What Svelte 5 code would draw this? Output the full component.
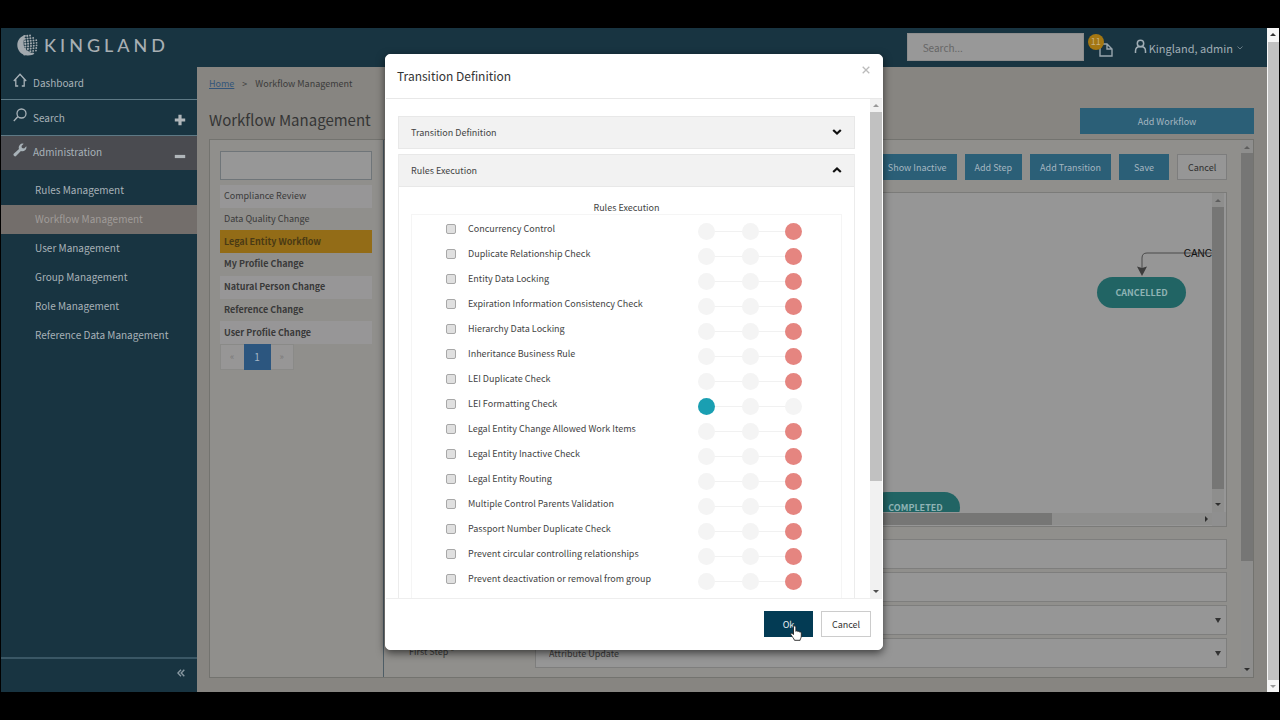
<script>
  const subItems = [
    'Rules Management',
    'Workflow Management',
    'User Management',
    'Group Management',
    'Role Management',
    'Reference Data Management'
  ];

  const workflows = [
    { name: 'Compliance Review' },
    { name: 'Data Quality Change' },
    { name: 'Legal Entity Workflow', bold: true, active: true },
    { name: 'My Profile Change', bold: true },
    { name: 'Natural Person Change', bold: true },
    { name: 'Reference Change', bold: true },
    { name: 'User Profile Change', bold: true }
  ];

  // level: 0 = on, 1 = warn, 2 = off
  const rules = [
    'Concurrency Control',
    'Duplicate Relationship Check',
    'Entity Data Locking',
    'Expiration Information Consistency Check',
    'Hierarchy Data Locking',
    'Inheritance Business Rule',
    'LEI Duplicate Check',
    'LEI Formatting Check',
    'Legal Entity Change Allowed Work Items',
    'Legal Entity Inactive Check',
    'Legal Entity Routing',
    'Multiple Control Parents Validation',
    'Passport Number Duplicate Check',
    'Prevent circular controlling relationships',
    'Prevent deactivation or removal from group'
  ].map((name) => ({ name, level: name === 'LEI Formatting Check' ? 0 : 2 }));

  const globeDots = [];
  for (let row = 0; row < 8; row++) {
    for (let col = 0; col < 5; col++) {
      const x = 8.5 + col * 2.8 - Math.abs(row - 3.5) * 0.3;
      const y = 2.2 + row * 2.6 - col * 0.3;
      if ((x - 10.5) ** 2 + (y - 11) ** 2 < 108) globeDots.push({ x, y, r: 1.15 - col * 0.06 });
    }
  }
</script>

{#snippet bar(axis, cls)}
  <div class="bar {axis} {cls}" aria-hidden="true">
    <svg class="arrow" viewBox="0 0 12 12"><path d={axis === 'v' ? 'M3 8 6 5l3 3z' : 'M8 3 5 6l3 3z'} /></svg>
    <div class="track"><div class="thumb"></div></div>
    <svg class="arrow end" viewBox="0 0 12 12"><path d={axis === 'v' ? 'M3 5l3 3 3-3z' : 'M5 3l3 3-3 3z'} /></svg>
  </div>
{/snippet}

<div class="screen">
  <div class="page">
    <header class="top">
      <div class="logo">
        <svg viewBox="0 0 21 22" aria-hidden="true">
          <path d="M9 .9C3.500 1.800 .3 6 .3 11S4 21.500 11 21.500c3 0 5-1 6.500-2.300C12 19 7.500 16 6.800 11.500S7 4 9 .9z" />
          {#each globeDots as d}<circle cx={d.x} cy={d.y} r={d.r} />{/each}
        </svg>
        <span class="wordmark">KINGLAND</span>
      </div>
      <div class="tools">
        <input class="find" type="text" placeholder="Search..." aria-label="Search" />
        <button class="inbox" aria-label="Work items">
          <svg viewBox="0 0 16 16"><path d="M2 2h7l5 5v7H2zM9 2v5h5" /></svg>
          <span class="badge">11</span>
        </button>
        <button class="user">
          <svg class="person" viewBox="0 0 13 15"><circle cx="6.500" cy="4.500" r="3.200" /><path d="M1.500 14V12c0-3 2-4.500 5-4.500s5 1.500 5 4.500v2" /></svg>
          <span>Kingland, admin</span>
          <svg class="caret" viewBox="0 0 6 6"><path d="M.5 1.500 3 4l2.500-2.500" /></svg>
        </button>
      </div>
    </header>

    <div class="body">
      <nav class="side">
        <a class="item dash" href="#dashboard">
          <svg viewBox="0 0 14 14"><path d="M.8 8 7 1.200 13.200 8M2.800 6.500V13h2.400M11.200 6.500V13H8.800" /></svg>
          <span>Dashboard</span>
        </a>
        <a class="item search" href="#search">
          <svg viewBox="0 0 14 14"><circle cx="8.500" cy="5.500" r="4.500" /><path d="M5 8.500.8 13" /></svg>
          <span>Search</span>
          <svg class="sign" viewBox="0 0 12 12"><path d="M6 .8v10.400M.8 6h10.400" /></svg>
        </a>
        <a class="item admin" href="#administration">
          <svg viewBox="0 0 14 14"><path class="solid" d="M13.300 3.300a4 4 0 0 1-5.400 4.700L3.300 12.800a1.600 1.600 0 0 1-2.300-2.300L6 6A4 4 0 0 1 10.700.7L8.500 2.900l.4 2.200 2.200.4z" /></svg>
          <span>Administration</span>
          <svg class="sign" viewBox="0 0 12 12"><path d="M.8 7.500h10.400" /></svg>
        </a>
        <ul class="sub">
          {#each subItems as s, i}
            <li><a href="#admin-{i}" class:current={i === 1}>{s}</a></li>
          {/each}
        </ul>
        <button class="collapse" aria-label="Collapse menu">
          <svg viewBox="0 0 8 8"><path d="M4 .8.9 4 4 7.200M7.300.8 4.200 4l3.100 3.200" /></svg>
        </button>
      </nav>

      <main>
        <div class="crumbs"><a href="#home">Home</a><span class="sep">&gt;</span><span>Workflow Management</span></div>
        <div class="title-row">
          <h1>Workflow Management</h1>
          <button class="btn wide">Add Workflow</button>
        </div>

        <div class="panel">
          <aside>
            <input class="filter" type="text" aria-label="Filter workflows" />
            <ul class="list">
              {#each workflows as w}
                <li class:bold={w.bold} class:active={w.active}>{w.name}</li>
              {/each}
            </ul>
            <div class="pager">
              <button>«</button><button class="on">1</button><button>»</button>
            </div>
          </aside>

          <section class="editor">
            <div class="content">
              <div class="actions">
                <button class="btn">Show Inactive</button>
                <button class="btn">Add Step</button>
                <button class="btn">Add Transition</button>
                <button class="btn save">Save</button>
                <button class="btn plain">Cancel</button>
              </div>

              <div class="diagram">
                <div class="canvas">
                  <div class="node cancelled">CANCELLED</div>
                  <div class="node completed">COMPLETED</div>
                  <svg class="edge" viewBox="0 0 75 26"><path d="M5 18V8q0-5 5-5h65" /><path class="head" d="M0 16.500 5 18l5-1.500L5 26z" /></svg>
                  <span class="edge-label">CANC</span>
                </div>
                {@render bar('v', 'dim canvas-v')}
                {@render bar('h', 'dim canvas-h')}
                <div class="corner"></div>
              </div>

              <div class="form">
                <label for="wf-name">Name</label>
                <div class="field"><input id="wf-name" type="text" /></div>
                <label for="wf-desc">Description</label>
                <div class="field"><input id="wf-desc" type="text" /></div>
                <label for="wf-type">Type</label>
                <div class="field"><select id="wf-type"><option></option></select><i></i></div>
                <label for="wf-first">First Step *</label>
                <div class="field"><select id="wf-first"><option>Attribute Update</option></select><i></i></div>
              </div>
            </div>
            {@render bar('v', 'dim editor-v')}
          </section>
        </div>
      </main>
    </div>

    <div class="overlay">
      <div class="dialog" role="dialog" aria-labelledby="dlg-title">
        <div class="dlg-head">
          <h2 id="dlg-title">Transition Definition</h2>
          <button class="close" aria-label="Close"><svg viewBox="0 0 8 8"><path d="M.7.7l6.600 6.600M7.300.7.7 7.300" /></svg></button>
        </div>
        <div class="dlg-body">
          <div class="scroll">
            <button class="acc">
              <span>Transition Definition</span>
              <svg viewBox="0 0 10 6"><path d="M1.200 1 5 4.500 8.800 1" /></svg>
            </button>
            <div class="open">
              <button class="acc">
                <span>Rules Execution</span>
                <svg viewBox="0 0 10 6"><path d="M1.200 5 5 1.500 8.800 5" /></svg>
              </button>
              <div class="acc-body">
                <h3>Rules Execution</h3>
                <div class="rules">
                  {#each rules as r, i}
                    <div class="rule">
                      <input type="checkbox" id="rule-{i}" />
                      <label for="rule-{i}">{r.name}</label>
                      <div class="levels">
                        {#each [0, 1, 2] as l}
                          <span class="dot" class:teal={r.level === l && l === 0} class:red={r.level === l && l === 2}></span>
                        {/each}
                      </div>
                    </div>
                  {/each}
                  <div class="next"><span class="dot gray"></span></div>
                </div>
              </div>
            </div>
          </div>
          {@render bar('v', 'dlg-v')}
        </div>
        <div class="dlg-foot">
          <button class="ok">
            Ok
            <svg class="pointer" viewBox="0 0 12 16"><path d="M3.500 9.500V2a1.200 1.200 0 0 1 2.400 0v4.300c.3-.8 1.900-.7 2 .3.400-.6 1.600-.4 1.700.5.700-.4 1.700 0 1.700 1V11c0 2-1 2.600-1.200 4.300H4.500C4 13.500 1.800 11.500.8 9.500c-.3-1 .8-1.700 1.500-1z" /></svg>
          </button>
          <button class="cancel">Cancel</button>
        </div>
      </div>
    </div>
  </div>
  {@render bar('v', 'page-v')}
</div>

<style>
  :global(body) { background: #000; }
  * { box-sizing: border-box; }
  .screen {
    display: flex;
    height: 100vh;
    padding: 28px 1px;
    background: #000;
    font: 9px/14px "Noto Sans CJK SC", "Noto Sans", sans-serif;
    color: #3b3b3b;
  }
  button, input, select { font: inherit; color: inherit; margin: 0; border-radius: 0; }
  button { padding: 0; border: 0; background: none; }
  a { color: inherit; text-decoration: none; }
  ul { list-style: none; margin: 0; padding: 0; }
  h1, h2, h3 { margin: 0; font-weight: 400; }
  svg { display: block; fill: none; stroke: currentColor; }

  .page { position: relative; flex: 1; min-width: 0; display: flex; flex-direction: column; }

  .top {
    flex: none;
    height: 39px;
    display: flex;
    justify-content: space-between;
    align-items: center;
    padding: 0 24px 1px 16px;
    background: #183441;
    color: #a0adb5;
  }
  .logo { display: flex; align-items: center; gap: 6px; padding-bottom: 4px; }
  .logo svg { width: 21px; height: 22px; fill: #a2a9ae; stroke: none; }
  .wordmark { font: 500 18px/20px Lato, sans-serif; letter-spacing: 4px; color: #a8afb3; }
  .tools { display: flex; align-items: center; }
  .find { width: 177px; height: 28px; padding: 0 15px; border: 1px solid #8d8d8d; background: #989898; font-size: 10px; }
  .find::placeholder { color: #666; opacity: 1; }
  .inbox { position: relative; width: 16px; height: 16px; margin: 6px 20px 0 14px; }
  .inbox svg { stroke: #98a5ad; stroke-width: 1.400; }
  .badge {
    position: absolute; left: -10px; top: -8px;
    width: 16px; height: 16px; border-radius: 8px;
    background: #a47712; color: #c7b183; font-size: 9px; line-height: 16px; text-align: center;
  }
  .user { display: flex; align-items: center; gap: 2px; font-size: 11px; line-height: 16px; padding-top: 2px; }
  .person { width: 13px; height: 15px; stroke-width: 1.500; margin-bottom: 3px; }
  .caret { width: 6px; height: 6px; margin-left: 2px; opacity: .6; }

  .body { flex: 1; min-height: 0; display: flex; }
  .side { width: 196px; flex: none; display: flex; flex-direction: column; background: #183441; color: #a8b2b8; font-size: 10px; line-height: 16px; }
  .item { display: flex; align-items: center; gap: 6px; padding: 0 11px 0 12px; border-bottom: 1px solid #5e7985; }
  .item svg { width: 14px; height: 14px; stroke-width: 1.300; margin-bottom: 5px; }
  .item .sign { width: 12px; height: 12px; margin: 5px 0 0 auto; stroke-width: 3.200; color: #b0b6ba; }
  .dash { height: 33px; padding-bottom: 1px; }
  .search { height: 36px; }
  .admin { height: 34px; padding-bottom: 2px; background: #4a4b50; border-bottom: 0; }
  .item .solid { fill: currentColor; stroke: none; }
  .sub { padding-top: 6px; }
  .sub a { display: block; height: 29px; padding: 0 34px; line-height: 28px; white-space: nowrap; }
  .sub .current { background: #736e6b; color: #a09c99; }
  .collapse { margin-top: auto; height: 35px; border-top: 2px solid #3a5765; display: flex; justify-content: flex-end; align-items: center; padding: 0 12px 5px; color: #8797a0; }
  .collapse svg { width: 8px; height: 8px; stroke-width: 1.400; }

  main { flex: 1; min-width: 0; display: flex; flex-direction: column; padding: 9px 13px 14px 12px; background: #878581; }
  .crumbs { display: flex; align-items: center; gap: 8px; height: 16px; }
  .crumbs a { color: #33557a; text-decoration: underline; }
  .title-row { display: flex; justify-content: space-between; align-items: center; height: 26px; margin: 16px 0 5px; }
  h1 { font-size: 15px; line-height: 20px; padding-bottom: 3px; color: #353535; }
  .btn { height: 26px; padding: 1px 10px 0; background: #2b5f77; color: #a5b6c0; }
  .btn.wide { width: 174px; }

  .panel { flex: 1; min-height: 0; display: flex; border: 1px solid #73736f; background: #908f8c; }
  aside { width: 174px; flex: none; padding: 11px 11px 0 10px; border-right: 1px solid #4e5d66; }
  .filter { display: block; width: 100%; height: 29px; border: 1px solid #6f7579; background: #979797; }
  .list { display: grid; grid-auto-rows: 1fr; height: 159px; margin-top: 5px; }
  .list li { display: flex; align-items: center; padding: 0 4px; }
  .list li:nth-child(odd) { background: #979697; }
  .list .bold { font-weight: 700; color: #393939; }
  .list li.active { background: #936c17; color: #4a3a14; }
  .pager { display: flex; width: 74px; height: 26px; border: 1px solid #8a8a88; background: #979696; }
  .pager button { flex: 1; color: #777; }
  .pager .on { flex: none; width: 27px; height: 26px; margin-top: -1px; background: #2c567f; color: #a5b5c5; font-size: 10px; }

  .editor { flex: 1; min-width: 0; display: flex; }
  .content { flex: 1; min-width: 0; display: flex; flex-direction: column; padding: 14px 14px 0 25px; }
  .actions { display: flex; justify-content: flex-end; gap: 8px; }
  .actions .save { width: 50px; }
  .actions .plain { background: #969696; border: 1px solid #7d7d7d; color: #2f2f2f; width: 50px; }
  .diagram {
    display: grid; grid-template: 1fr 14px / 1fr 14px;
    height: 335px; margin-top: 12px; border: 1px solid #7b7b79; background: #969696;
  }
  .canvas { position: relative; overflow: hidden; }
  .node { position: absolute; display: flex; align-items: center; justify-content: center; height: 31px; padding-top: 1px; border-radius: 16px; background: #216464; color: #8fb3b4; font-weight: 700; }
  .cancelled { right: 26px; top: 84px; width: 89px; }
  .completed { right: 252px; top: 299px; width: 89px; }
  .edge { position: absolute; right: 0; top: 57px; width: 75px; height: 26px; stroke: #4a4a4a; }
  .edge .head { fill: #3c3c3c; stroke: none; }
  .edge-label { position: absolute; right: 0; top: 54px; font: 10px/14px "Liberation Sans", sans-serif; color: #111; }
  .corner { background: #8f8f8f; }

  .form { display: grid; grid-template-columns: 126px 1fr; row-gap: 3px; margin-top: 12px; }
  .form label { line-height: 28px; }
  .field { position: relative; }
  .field input, .field select { display: block; width: 100%; height: 30px; padding: 1px 13px 0; border: 1px solid #7e7e7d; background: #969696; appearance: none; }
  .field i { position: absolute; right: 6px; top: 13px; border: 3px solid transparent; border-top: 5px solid #333; border-bottom: 0; }

  .bar { display: flex; background: #f1f1f1; color: #505050; }
  .bar.v { flex-direction: column; width: 12px; }
  .bar.h { height: 12px; }
  .arrow { width: 12px; height: 12px; flex: none; fill: currentColor; stroke: none; }
  .track { flex: 1; min-height: 0; display: flex; }
  .v .track { flex-direction: column; }
  .thumb { background: #c1c1c1; }
  .v .arrow:first-child { color: #999; }
  .dim { background: #8e8e8d; color: #2e2e2e; }
  .dim .thumb { background: #767675; }
  .v.dim .arrow:first-child { color: #5e5e5e; }
  .editor-v { padding: 1px 0 2px; }
  .editor-v .thumb { height: 80%; }
  .canvas-v { padding: 1px 0 2px; }
  .canvas-v .track { padding-top: 1px; }
  .canvas-v .thumb { height: 97%; }
  .canvas-h { align-self: center; }
  .canvas-h .thumb { width: 81%; }
  .page-v { background: #f6f6f6; }
  .page-v .thumb { flex: 1; margin: 2px 0 0 1px; }
  .page-v .arrow:first-child { color: #333; }
  .page-v .end { color: #999; }

  .overlay { position: absolute; inset: 0; display: flex; justify-content: center; padding: 26px 0 42px; }
  .dialog { width: 498px; display: flex; flex-direction: column; border-radius: 5px; background: #fff; border: 1px solid #fff; box-shadow: 0 3px 9px rgba(0, 0, 0, .6); color: #444; }
  .dlg-head { flex: none; height: 44px; display: flex; justify-content: space-between; align-items: center; padding: 0 12px 2px 11px; border-bottom: 1px solid #e8e8e8; }
  h2 { font-size: 12px; line-height: 16px; color: #333; }
  .close { margin-bottom: 11px; color: #bbb; }
  .close svg { width: 8px; height: 8px; stroke-width: 1.300; }
  .dlg-body { flex: 1; min-height: 0; display: flex; }
  .scroll { flex: 1; min-width: 0; overflow: hidden; padding: 17px 15px 0 12px; }
  .dlg-v .thumb { height: 78%; }
  .dlg-v .track { margin-top: 1px; }
  .dlg-v .end { margin-bottom: 1px; }
  .acc { display: flex; width: 100%; height: 33px; justify-content: space-between; align-items: center; padding: 1px 12px 0; border: 1px solid #e8e8e8; background: #f2f2f2; }
  .acc svg { width: 10px; height: 6px; color: #111; stroke-width: 2.200; margin-bottom: 3px; }
  .open { margin-top: 5px; border: solid #ececec; border-width: 0 1px; }
  .open .acc { border-width: 1px 0; }
  .acc-body { padding: 14px 12px; }
  h3 { font-size: 9px; line-height: 13px; text-align: center; }
  .rules { border: 1px solid #f5f5f5; padding: 1px 39px 20px 34px; }
  .rule { display: flex; align-items: center; height: 25px; }
  .rule input { appearance: none; width: 10px; height: 10px; border: 1px solid #a8a8a8; border-radius: 2px; background: #e0e0e0; }
  .rule label { flex: 1; padding-left: 12px; }
  .levels { display: flex; justify-content: space-between; width: 104px; margin-top: 5px; background: linear-gradient(#f1f1f1, #f1f1f1) center / 100% 1px no-repeat; }
  .dot { width: 17px; height: 17px; border-radius: 50%; background: #f4f4f4; }
  .teal { background: #1a9fb2; }
  .red { background: #e58580; }
  .gray { background: #999; }
  .next { display: flex; justify-content: flex-end; padding-top: 7px; }
  .dlg-foot { flex: none; height: 51px; display: flex; justify-content: flex-end; gap: 8px; padding: 12px 11px 0; border-top: 1px solid #eee; }
  .ok { position: relative; width: 49px; height: 26px; padding-top: 1px; background: #033b54; color: #e8eef1; }
  .pointer { position: absolute; left: 26px; top: 14px; width: 12px; height: 16px; fill: #fff; stroke: #222; stroke-width: .9; }
  .cancel { width: 50px; height: 26px; padding-top: 1px; border: 1px solid #ccc; background: #fff; color: #333; }
</style>
